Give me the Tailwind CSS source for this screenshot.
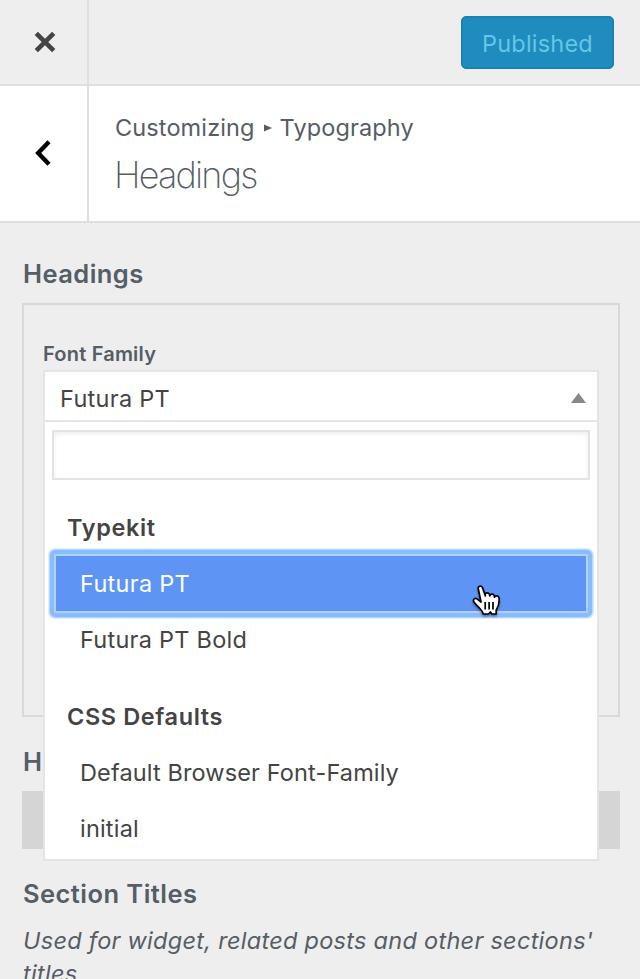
<!DOCTYPE html>
<html lang="en">

<head>
  <meta charset="UTF-8">
  <meta name="viewport" content="width=device-width, initial-scale=1.0">
  <title>Customize: Headings</title>
  <script src="https://cdn.jsdelivr.net/npm/@tailwindcss/browser@4"></script>
</head>

<body class="h-[979px] overflow-hidden bg-[#eeeeee] font-['Inter','Liberation_Sans',sans-serif] text-[#555d66]">

  <!-- Header actions -->
  <header class="flex h-[86px] border-b-2 border-[#dfdfdf]">
    <button class="flex w-[89px] items-center justify-center border-r-2 border-[#dfdfdf]" aria-label="Close">
      <svg class="ml-[2px] h-[22px] w-[22px]" viewBox="0 0 22 22" fill="none" stroke="#444444" stroke-width="4.6">
        <path d="M2.3 2.3 19.7 19.7M19.7 2.3 2.3 19.7" />
      </svg>
    </button>
    <div class="flex flex-1 items-start justify-end pr-[26px] pt-4">
      <button class="h-[53px] w-[153px] rounded-[5px] border border-[#1a7fb2] bg-[#1e8cbe] pt-[2px] text-[23.5px] tracking-[0.2px] text-[#66c6e4] shadow-[inset_0_0_0_1px_#1b84b6]">Published</button>
    </div>
  </header>

  <!-- Panel title -->
  <section class="flex h-[137px] border-b-2 border-[#dfdfdf] bg-white">
    <button class="flex w-[89px] items-center justify-center border-r-2 border-[#dfdfdf]" aria-label="Back">
      <svg class="mr-[2px] mb-[2px] h-[26px] w-4" viewBox="0 0 16 26" fill="none" stroke="#000000" stroke-width="4.4">
        <path d="M14 1.8 3.2 13 14 24.2" />
      </svg>
    </button>
    <div class="pl-[26px] pt-[26px]">
      <div class="flex h-8 items-center whitespace-nowrap text-[23.5px] tracking-[0.12px]">
        <span>Customizing</span>
        <svg class="ml-[9px] mr-2 h-2 w-2" viewBox="0 0 8 8" fill="#555d66">
          <path d="M0 0.5 8 4 0 7.5z" />
        </svg>
        <span>Typography</span>
      </div>
      <h1 class="-ml-px mt-[9px] h-11 text-[36px] font-extralight leading-[44px] tracking-[-1.8px]">Headings</h1>
    </div>
  </section>

  <!-- Controls -->
  <main class="pl-[22px] pr-5 pt-[35px]">
    <h2 class="h-8 pl-px text-[25.5px] font-semibold leading-8 tracking-[0.45px]">Headings</h2>

    <div class="mt-[13px] h-[414px] border-2 border-[#d8d8d8] px-[19px] pt-[35px]">
      <label class="block h-7 text-[20px] font-semibold leading-7 tracking-[0.2px]">Font Family</label>

      <div class="relative mt-[2px]">
        <div class="flex h-[52px] items-center justify-between border-2 border-[#e5e5e5] bg-white pl-[15px] pr-[11px] text-[#444444]">
          <span class="mt-[5px] text-[23.5px] tracking-[0.3px]">Futura PT</span>
          <svg class="mt-[3px] h-[10px] w-[15px]" viewBox="0 0 15 10" fill="#888888">
            <path d="M7.5 0 15 10H0z" />
          </svg>
        </div>

        <!-- Open dropdown -->
        <div class="absolute inset-x-0 top-[52px] h-[439px] border-2 border-t-0 border-[#e5e5e5] bg-white text-[23.5px] text-[#444444]">
          <input class="ml-[7px] mt-2 block h-[50px] w-[538px] border-2 border-[#e3e3e3] shadow-[inset_0_2px_4px_rgba(0,0,0,0.07)]" type="text">

          <div class="mt-5 h-[54px] pl-[22px] font-semibold leading-[56px] tracking-[0.65px]">Typekit</div>
          <div class="relative mx-[9px] -mb-px h-[59px] border-2 border-[#b0d1fb] bg-[#5e95f5] pl-6 leading-[55px] tracking-[0.3px] text-white">
            <!-- Focus ring -->
            <div class="absolute -inset-[6px] rounded-[5px] border-4 border-[#88bcfa] shadow-[0_0_0_1px_#b5d7fc,0_0_0_2px_#deeefe]"></div>
            Futura PT
            <svg class="absolute left-[416px] top-[28px] h-[36px] w-[32px] drop-shadow-[0_2px_1px_rgba(0,0,0,0.35)]" viewBox="0 0 32 36" fill="white" stroke="black" stroke-width="1.7" stroke-linejoin="round">
              <path d="M6.3 5C5.4 2.2 9.3 1 10.5 3.6L13.4 12 13.2 10C13.4 8.4 16.7 8.4 17.3 10L17.8 12C18 9.4 21.7 9.6 22.1 11.3L22.5 13.2C23 11 26.8 11.6 27.1 14.2C27.7 20.5 26.3 22.4 24.2 26V30H19.8L18.4 28 16.4 30H11.3C10 25.3 5.3 22.4 2.3 18.5C-.3 15.2 3.5 13 6.2 15.8L9 18Z" />
              <path d="M13.2 18V25.5M17.1 18V25.5M21 18V25.5" fill="none" />
            </svg>
          </div>
          <div class="h-[55px] pl-[35px] leading-[55px] tracking-[0.25px]">Futura PT Bold</div>

          <div class="mt-[22px] h-14 pl-[22px] font-semibold leading-[56px] tracking-[0.6px]">CSS Defaults</div>
          <div class="h-14 pl-[35px] leading-[56px] tracking-[0.13px]">Default Browser Font-Family</div>
          <div class="h-14 pl-[35px] leading-[56px] tracking-[0.2px]">initial</div>
        </div>
      </div>
    </div>

    <h2 class="mt-[29px] h-8 pl-px text-[25.5px] font-semibold leading-8">H</h2>
    <div class="mt-[13px] h-[58px] bg-[#d5d5d5]"></div>

    <h2 class="mt-[29px] h-8 pl-px text-[25.5px] font-semibold leading-8 tracking-[0.45px]">Section Titles</h2>
    <p class="mt-[14px] whitespace-nowrap pl-px text-[23.5px] italic leading-[33px] tracking-[0.28px]">Used for widget, related posts and other sections'<br>titles.</p>
  </main>

</body>

</html>
